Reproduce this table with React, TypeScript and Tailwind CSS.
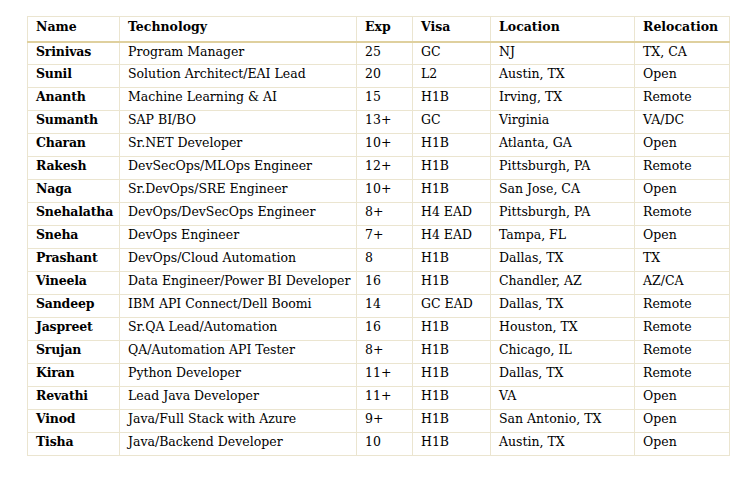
import React from "react";

const rows: string[][] = [
  ["Srinivas", "Program Manager", "25", "GC", "NJ", "TX, CA"],
  ["Sunil", "Solution Architect/EAI Lead", "20", "L2", "Austin, TX", "Open"],
  ["Ananth", "Machine Learning & AI", "15", "H1B", "Irving, TX", "Remote"],
  ["Sumanth", "SAP BI/BO", "13+", "GC", "Virginia", "VA/DC"],
  ["Charan", "Sr.NET Developer", "10+", "H1B", "Atlanta, GA", "Open"],
  ["Rakesh", "DevSecOps/MLOps Engineer", "12+", "H1B", "Pittsburgh, PA", "Remote"],
  ["Naga", "Sr.DevOps/SRE Engineer", "10+", "H1B", "San Jose, CA", "Open"],
  ["Snehalatha", "DevOps/DevSecOps Engineer", "8+", "H4 EAD", "Pittsburgh, PA", "Remote"],
  ["Sneha", "DevOps Engineer", "7+", "H4 EAD", "Tampa, FL", "Open"],
  ["Prashant", "DevOps/Cloud Automation", "8", "H1B", "Dallas, TX", "TX"],
  ["Vineela", "Data Engineer/Power BI Developer", "16", "H1B", "Chandler, AZ", "AZ/CA"],
  ["Sandeep", "IBM API Connect/Dell Boomi", "14", "GC EAD", "Dallas, TX", "Remote"],
  ["Jaspreet", "Sr.QA Lead/Automation", "16", "H1B", "Houston, TX", "Remote"],
  ["Srujan", "QA/Automation API Tester", "8+", "H1B", "Chicago, IL", "Remote"],
  ["Kiran", "Python Developer", "11+", "H1B", "Dallas, TX", "Remote"],
  ["Revathi", "Lead Java Developer", "11+", "H1B", "VA", "Open"],
  ["Vinod", "Java/Full Stack with Azure", "9+", "H1B", "San Antonio, TX", "Open"],
  ["Tisha", "Java/Backend Developer", "10", "H1B", "Austin, TX", "Open"],
];

const headers = ["Name", "Technology", "Exp", "Visa", "Location", "Relocation"];
const widths = ["w-[92px]", "w-[237px]", "w-[56px]", "w-[78px]", "w-[144px]", "w-[95px]"];

export default function App() {
  return (
    <div
      className="w-[755px] h-[488px] bg-white pl-[27px] pt-[16px] text-black text-[12.5px]"
      style={{ fontFamily: '"DejaVu Serif", serif' }}
    >
      <table className="table-fixed border-collapse w-[702px]">
        <colgroup>
          {widths.map((w, i) => (
            <col key={i} className={w} />
          ))}
        </colgroup>
        <thead>
          <tr className="h-[25px]">
            {headers.map((h) => (
              <th
                key={h}
                className="border border-[#ebe5d0] border-b-2 border-b-[#dfd09e] text-left font-bold pl-[8px] pr-1 pt-0 pb-[2px] align-middle whitespace-nowrap"
              >
                {h}
              </th>
            ))}
          </tr>
        </thead>
        <tbody>
          {rows.map((r, ri) => (
            <tr key={ri} className="h-[23px]">
              {r.map((c, ci) => (
                <td
                  key={ci}
                  className={`border border-[#ebe5d0] pl-[8px] pr-1 pt-0 pb-[3px] align-middle whitespace-nowrap ${
                    ci === 0 ? "font-bold tracking-[-0.2px]" : "font-normal"
                  }`}
                >
                  {c}
                </td>
              ))}
            </tr>
          ))}
        </tbody>
      </table>
    </div>
  );
}
